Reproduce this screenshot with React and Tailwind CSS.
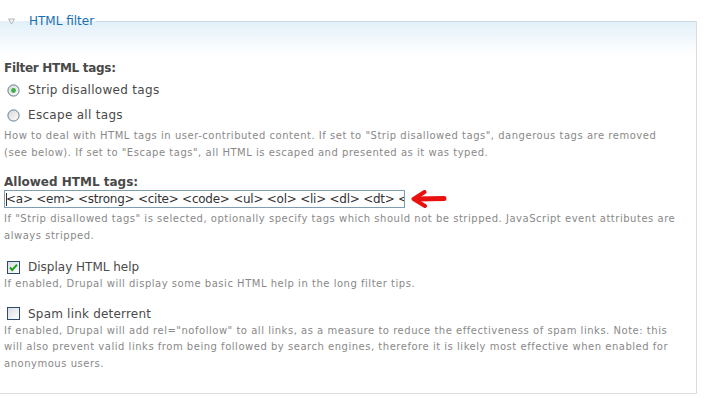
import React from "react";

function Radio({ checked }) {
  return (
    <svg width="13" height="13" viewBox="0 0 13 13" className="shrink-0">
      <defs>
        <linearGradient id={checked ? "rg1" : "rg2"} x1="0" y1="0" x2="1" y2="1">
          <stop offset="0" stopColor="#d6d6d6" />
          <stop offset="1" stopColor="#ffffff" />
        </linearGradient>
      </defs>
      <circle cx="6.5" cy="6.5" r="5.6" fill={`url(#${checked ? "rg1" : "rg2"})`} stroke="#5e7a8a" strokeWidth="1" />
      {checked && <circle cx="6.5" cy="6.5" r="2.4" fill="#3cb043" />}
    </svg>
  );
}

function Check({ checked }) {
  return (
    <svg width="13" height="13" viewBox="0 0 13 13" className="shrink-0">
      <defs>
        <linearGradient id={checked ? "cg1" : "cg2"} x1="0" y1="0" x2="1" y2="1">
          <stop offset="0" stopColor="#d8dcdf" />
          <stop offset="1" stopColor="#ffffff" />
        </linearGradient>
      </defs>
      <rect x="0.5" y="0.5" width="12" height="12" fill={`url(#${checked ? "cg1" : "cg2"})`} stroke="#2c4c6c" strokeWidth="1" />
      {checked && <path d="M3 6.5 L5.3 9 L10 3.6" fill="none" stroke="#21a121" strokeWidth="2" />}
    </svg>
  );
}

export default function App() {
  return (
    <div className="w-[713px] h-[414px] bg-white font-['DejaVu_Sans',sans-serif] text-[#494949] pt-[21px] overflow-hidden">
      <div className="flow-root w-[697px] h-[373px] border-r border-b border-[#dcdcdc] bg-gradient-to-b from-[#e2f0f9] to-white bg-no-repeat bg-[length:100%_34px]">
        <div className="flex items-center h-[14px] -mt-[7px]">
          <svg width="7" height="7" viewBox="0 0 7 7" className="ml-[8px]">
            <path d="M0.5 1 L6.5 1 L3.5 6 Z" fill="#f4f4f4" stroke="#b5b5b5" strokeWidth="1" />
          </svg>
          <span className="ml-[14px] text-[12px] text-[#1a6fb0] leading-none">HTML filter</span>
          <div className="flex-1 h-px bg-[#c8d8e2] ml-[2px] self-center"></div>
        </div>

        <div className="pl-[4px] pr-[14px] pt-[31px]">
          <div className="text-[12px] font-bold leading-[18px] tracking-[-0.3px]">Filter HTML tags:</div>
          <div className="flex items-center gap-[8px] pl-[3px] mt-[2px] h-[22px] text-[12px] tracking-[0.3px]">
            <Radio checked />
            <span>Strip disallowed tags</span>
          </div>
          <div className="flex items-center gap-[8px] pl-[3px] mt-[3px] h-[22px] text-[12px] tracking-[0.3px]">
            <Radio />
            <span>Escape all tags</span>
          </div>
          <div className="text-[10px] leading-[16.5px] tracking-[0.52px] text-[#898989] mt-[2px]">
            How to deal with HTML tags in user-contributed content. If set to "Strip disallowed tags", dangerous tags are removed (see below). If set to "Escape tags", all HTML is escaped and presented as it was typed.
          </div>

          <div className="text-[12px] font-bold leading-[18px] mt-[12px]">Allowed HTML tags:</div>
          <div className="flex items-center -mt-px">
            <div className="w-[401px] h-[18px] border border-[#7e9db0] overflow-hidden whitespace-nowrap text-[12px] leading-[16px] tracking-[-0.25px] pl-[1px] text-[#333] flex items-center">
              <span className="w-px h-[13px] bg-[#333] shrink-0"></span>
              <span className="-ml-px">&lt;a&gt; &lt;em&gt; &lt;strong&gt; &lt;cite&gt; &lt;code&gt; &lt;ul&gt; &lt;ol&gt; &lt;li&gt; &lt;dl&gt; &lt;dt&gt; &lt;dd&gt;</span>
            </div>
            <svg width="36" height="18" viewBox="0 0 36 18" className="ml-[6px]">
              <path d="M33 8.5 L5 9" stroke="#e8110f" strokeWidth="5" strokeLinecap="round" fill="none" />
              <path d="M13.5 2 L2.5 9 L14 16" stroke="#e8110f" strokeWidth="4" strokeLinecap="round" strokeLinejoin="round" fill="none" />
            </svg>
          </div>
          <div className="text-[10px] leading-[16.5px] tracking-[0.52px] text-[#898989] mt-[3px]">
            If "Strip disallowed tags" is selected, optionally specify tags which should not be stripped. JavaScript event attributes are always stripped.
          </div>

          <div className="flex items-center gap-[8px] pl-[3px] mt-[14px] h-[18px] text-[12px]">
            <Check checked />
            <span>Display HTML help</span>
          </div>
          <div className="text-[10px] leading-[16.5px] tracking-[0.52px] text-[#898989]">
            If enabled, Drupal will display some basic HTML help in the long filter tips.
          </div>

          <div className="flex items-center gap-[8px] pl-[3px] mt-[12px] h-[18px] text-[12px] tracking-[0.2px]">
            <Check />
            <span>Spam link deterrent</span>
          </div>
          <div className="text-[10px] leading-[16.5px] tracking-[0.52px] text-[#898989]">
            If enabled, Drupal will add rel="nofollow" to all links, as a measure to reduce the effectiveness of spam links. Note: this will also prevent valid links from being followed by search engines, therefore it is likely most effective when enabled for anonymous users.
          </div>
        </div>
      </div>
    </div>
  );
}
